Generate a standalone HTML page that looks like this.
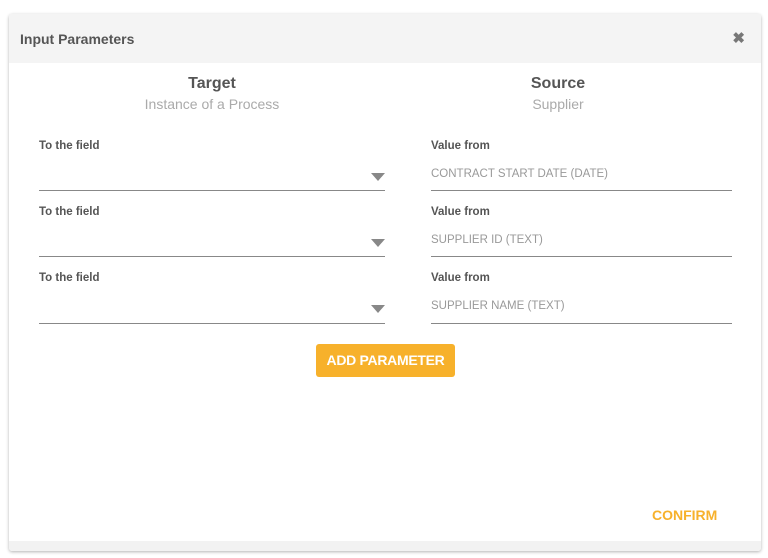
<!DOCTYPE html>
<html><head><style>
body{margin:0;background:#fff;font-family:"Liberation Sans",sans-serif;width:768px;height:558px;position:relative;overflow:hidden}
.dlg{position:absolute;left:9px;top:14px;width:752px;height:537px;background:#fff;border-radius:3px;box-shadow:0 1px 3px rgba(0,0,0,.3);overflow:hidden}
.hd{position:absolute;left:0;top:0;right:0;height:49px;background:#f4f4f4}
.hd .t{position:absolute;left:11px;top:17px;font-size:14px;font-weight:bold;color:#555}
.hd .x{position:absolute;right:16px;top:15px;font-size:15px;font-weight:bold;color:#777}
.ft{position:absolute;left:0;bottom:0;right:0;height:10px;background:#f2f2f2}
.a{position:absolute;font-size:13px}
.h{font-size:16px;font-weight:bold;color:#555;text-align:center}
.s{font-size:14px;color:#aaa;text-align:center}
.lbl{font-size:11.5px;font-weight:bold;color:#555}
.val{font-size:11.5px;color:#999}
.ln{position:absolute;height:1px;background:#888}
.tri{position:absolute;width:0;height:0;border-left:7px solid transparent;border-right:7px solid transparent;border-top:8px solid #888}
.btn{position:absolute;left:316px;top:344px;width:139px;height:33px;background:#f7b12b;border-radius:3px;color:#fff;font-weight:bold;font-size:14px;text-align:center;line-height:33px;letter-spacing:-0.3px}
.cf{position:absolute;left:652px;top:507px;color:#f7b12b;font-weight:bold;font-size:14px}
</style></head><body>
<div class="dlg"><div class="hd"><div class="t">Input Parameters</div><div class="x">✖</div></div><div class="ft"></div></div>
<div class="a h" style="left:112px;width:200px;top:75px">Target</div>
<div class="a s" style="left:112px;width:200px;top:96px">Instance of a Process</div>
<div class="a h" style="left:458px;width:200px;top:75px">Source</div>
<div class="a s" style="left:458px;width:200px;top:96px">Supplier</div>

<div class="a lbl" style="left:39px;top:140px">To the field</div>
<div class="tri" style="left:371px;top:173px"></div>
<div class="ln" style="left:39px;width:346px;top:190px"></div>
<div class="a lbl" style="left:431px;top:140px">Value from</div>
<div class="a val" style="left:431px;top:168px">CONTRACT START DATE (DATE)</div>
<div class="ln" style="left:431px;width:301px;top:190px"></div>

<div class="a lbl" style="left:39px;top:206px">To the field</div>
<div class="tri" style="left:371px;top:239px"></div>
<div class="ln" style="left:39px;width:346px;top:256px"></div>
<div class="a lbl" style="left:431px;top:206px">Value from</div>
<div class="a val" style="left:431px;top:234px">SUPPLIER ID (TEXT)</div>
<div class="ln" style="left:431px;width:301px;top:256px"></div>

<div class="a lbl" style="left:39px;top:272px">To the field</div>
<div class="tri" style="left:371px;top:305px"></div>
<div class="ln" style="left:39px;width:346px;top:323px"></div>
<div class="a lbl" style="left:431px;top:272px">Value from</div>
<div class="a val" style="left:431px;top:300px">SUPPLIER NAME (TEXT)</div>
<div class="ln" style="left:431px;width:301px;top:323px"></div>

<div class="btn">ADD PARAMETER</div>
<div class="cf">CONFIRM</div>
</body></html>
